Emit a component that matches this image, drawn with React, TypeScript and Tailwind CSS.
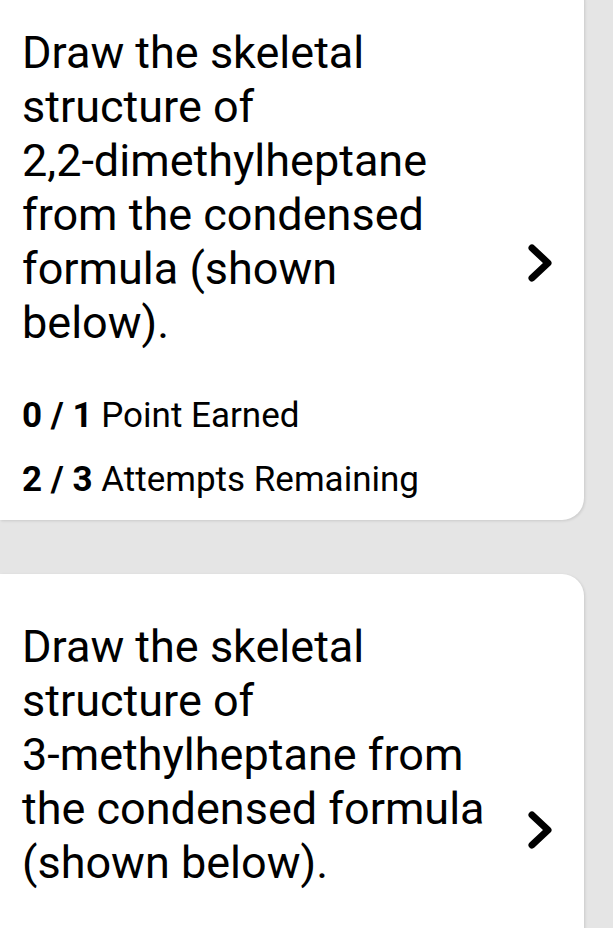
const questions = [
  {
    lead: 'Draw the skeletal structure of ',
    compound: '2,2-dimethylheptane',
    tail: ' from the condensed formula (shown below).',
    earned: '0 / 1',
    attempts: '2 / 3',
  },
  {
    lead: 'Draw the skeletal structure of ',
    compound: '3-methylheptane',
    tail: ' from the condensed formula (shown below).',
    earned: '0 / 1',
    attempts: '3 / 3',
  },
];

function Chevron() {
  return (
    <svg width="26" height="40" viewBox="0 0 26 40" className="shrink-0 ml-auto">
      <polyline
        points="5,5 21,20 5,35"
        fill="none"
        stroke="#000"
        strokeWidth="7"
        strokeLinecap="round"
        strokeLinejoin="round"
      />
    </svg>
  );
}

export default function App() {
  return (
    <div className="h-[928px] w-[613px] overflow-hidden bg-[#e5e5e5] font-['Roboto',sans-serif] text-black">
      <div className="flex flex-col gap-[54px] -mt-[20px]">
        {questions.map((q, idx) => (
          <div
            key={idx}
            className="flex items-center w-[584px] bg-white rounded-r-[22px] shadow-[1px_1px_3px_rgba(0,0,0,0.12)] pl-[22px] pr-[31px] pt-[46px] pb-[20px]"
          >
            <div className="w-[466px]">
              <p className="text-[45px] leading-[54px]">
                {q.lead}
                <span className="whitespace-nowrap">{q.compound}</span>
                {q.tail}
              </p>
              <p className="mt-[46px] text-[35px] leading-[40px]">
                <span className="font-bold">{q.earned}</span> Point Earned
              </p>
              <p className="mt-[24px] text-[35px] leading-[40px]">
                <span className="font-bold">{q.attempts}</span> Attempts Remaining
              </p>
            </div>
            <Chevron />
          </div>
        ))}
      </div>
    </div>
  );
}
